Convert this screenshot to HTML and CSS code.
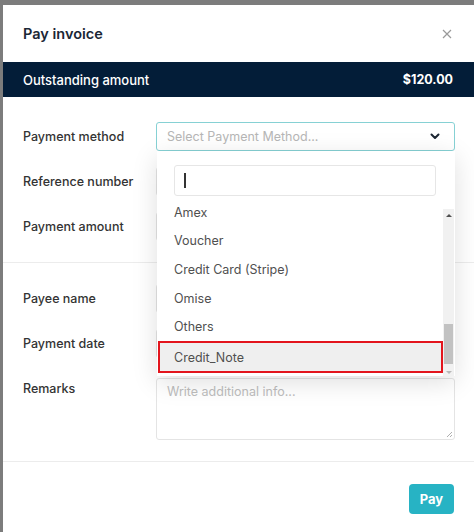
FILE: index.html
```html
<!doctype html>
<html>
  <head>
    <meta charset="UTF-8" />
    <title>Pay invoice</title>
    <link rel="stylesheet" href="styles.css">
  </head>
  <body>
    <div class="modal">
      <!-- header -->
      <div class="modal-header">
        <span class="modal-title">Pay invoice</span>
        <span class="modal-close">
          <svg xmlns="http://www.w3.org/2000/svg" width="10" height="10" viewBox="0 0 10 10">
            <path d="M1 1L9 9M9 1L1 9" stroke="#9a9a9a" stroke-width="1.2" fill="none" />
          </svg>
        </span>
      </div>
      <!-- outstanding -->
      <div class="outstanding">
        <span>Outstanding amount</span>
        <span class="outstanding-value">$120.00</span>
      </div>

      <!-- section 1 -->
      <div class="section">
        <div class="row">
          <label class="row-label">Payment method</label>
          <div class="select-wrap">
            <div class="select">
              <span class="select-placeholder">Select Payment Method...</span>
              <svg xmlns="http://www.w3.org/2000/svg" width="10" height="7" viewBox="0 0 10 7">
                <path d="M1.5 1.5L5 5L8.5 1.5" stroke="#1d2733" stroke-width="2" fill="none" stroke-linecap="round" stroke-linejoin="round" />
              </svg>
            </div>
            <!-- dropdown -->
            <div class="dropdown">
              <div class="dropdown-search">
                <span class="caret"></span>
              </div>
              <div class="dropdown-body">
                <ul class="dropdown-list">
                  <li>Amex</li>
                  <li>Voucher</li>
                  <li>Credit Card (Stripe)</li>
                  <li>Omise</li>
                  <li>Others</li>
                  <li class="active">Credit_Note</li>
                </ul>
                <div class="scrollbar">
                  <span class="scroll-up"></span>
                  <span class="scroll-thumb"></span>
                  <span class="scroll-down"></span>
                </div>
              </div>
            </div>
          </div>
        </div>
        <div class="row">
          <label class="row-label">Reference number</label>
          <div class="input"></div>
        </div>
        <div class="row">
          <label class="row-label">Payment amount</label>
          <div class="input"></div>
        </div>
      </div>

      <!-- section 2 -->
      <div class="section">
        <div class="row">
          <label class="row-label">Payee name</label>
          <div class="input"></div>
        </div>
        <div class="row">
          <label class="row-label">Payment date</label>
          <div class="input"></div>
        </div>
        <div class="row row-top">
          <label class="row-label">Remarks</label>
          <div class="textarea">
            <span class="textarea-placeholder">Write additional info...</span>
            <svg class="resize" xmlns="http://www.w3.org/2000/svg" width="7" height="7" viewBox="0 0 7 7">
              <path d="M6 1L1 6M6 4L4 6" stroke="#9a9a9a" stroke-width="0.8" fill="none" />
            </svg>
          </div>
        </div>
      </div>

      <!-- footer -->
      <div class="modal-footer">
        <div class="button-pay">Pay</div>
      </div>
    </div>
  </body>
</html>
```

FILE: styles.css
```css
html,
body {
  margin: 0;
  height: 100%;
}

body {
  background-color: #7c7c7c;
  overflow: hidden;
  font-family: 'Inter', 'Noto Sans', sans-serif;
  color: #333333;
  -webkit-font-smoothing: antialiased;
}

/* modal */
.modal {
  margin: 5px 0 0 3px;
  width: 471px;
  height: 527px;
  background-color: #ffffff;
  display: flex;
  flex-direction: column;
}

/* header */
.modal-header {
  height: 57px;
  display: flex;
  justify-content: space-between;
  align-items: center;
  padding: 0 22px 0 20px;
  box-sizing: border-box;
}
.modal-header > .modal-title {
  font-size: 14.5px;
  font-weight: 600;
  color: #1b2736;
}
.modal-header > .modal-close {
  display: flex;
}

/* outstanding */
.outstanding {
  height: 35px;
  background-color: #031d38;
  color: #ffffff;
  display: flex;
  justify-content: space-between;
  align-items: center;
  padding: 0 21px 0 20px;
  font-size: 13px;
  font-weight: 500;
}
.outstanding > .outstanding-value {
  font-weight: 700;
  font-size: 12.5px;
}

/* sections */
.section {
  padding: 25px 16px 21px 20px;
  display: flex;
  flex-direction: column;
  gap: 16px;
  border-bottom: 1px solid #ececec;
}
.section + .section {
  padding-top: 21px;
}
.row {
  display: grid;
  grid-template-columns: 133px 299px;
  align-items: center;
}
.row.row-top {
  align-items: start;
  margin-top: 4px;
}
.row.row-top > .row-label {
  padding-top: 3px;
}
.row-label {
  font-size: 12.5px;
  font-weight: 500;
  color: #333333;
}
.input {
  height: 29px;
  border: 1px solid #e4e4e4;
  border-radius: 3px;
  box-sizing: border-box;
}

/* select */
.select-wrap {
  position: relative;
}
.select {
  height: 29px;
  border: 1px solid #86d1d4;
  border-radius: 3px;
  box-sizing: border-box;
  display: flex;
  justify-content: space-between;
  align-items: center;
  padding: 0 14px 0 10px;
}
.select > .select-placeholder {
  font-size: 12.5px;
  color: #b6b6b6;
}

/* dropdown */
.dropdown {
  position: absolute;
  top: 29px;
  left: 1px;
  width: 298px;
  height: 225px;
  background-color: #ffffff;
  box-shadow: 0 6px 24px rgba(0, 0, 0, 0.13);
  display: flex;
  flex-direction: column;
  z-index: 2;
}
.dropdown-search {
  margin: 14px 19px 0 17px;
  height: 29px;
  border: 1px solid #e6e6e6;
  border-radius: 3px;
  display: flex;
  align-items: center;
  padding-left: 9px;
}
.dropdown-search > .caret {
  width: 1.5px;
  height: 15px;
  background-color: #333333;
}
.dropdown-body {
  flex: 1;
  display: flex;
  margin-top: 4px;
  min-height: 0;
}
.dropdown-list {
  list-style: none;
  margin: 0;
  padding: 0;
  flex: 1;
  display: flex;
  flex-direction: column;
  justify-content: flex-end;
  overflow: hidden;
}
.dropdown-list > li {
  height: 28.6px;
  display: flex;
  align-items: center;
  padding-left: 17px;
  font-size: 12.5px;
  color: #505050;
  flex-shrink: 0;
  box-sizing: border-box;
}
.dropdown-list > li.active {
  background-color: #efefef;
  outline: 2px solid #e3151d;
  outline-offset: -2px;
  margin-left: 1px;
  padding-left: 16px;
  height: 32px;
  margin-bottom: 3px;
}

/* scrollbar */
.scrollbar {
  width: 11px;
  margin: 9px 1px 0 0;
  background-color: #f1f1f1;
  display: flex;
  flex-direction: column;
  align-items: center;
  justify-content: space-between;
}
.scroll-up {
  margin-top: 5px;
  width: 0;
  height: 0;
  border-left: 3px solid transparent;
  border-right: 3px solid transparent;
  border-bottom: 3px solid #505050;
}
.scroll-thumb {
  width: 9px;
  height: 40px;
  background-color: #c2c2c2;
  margin-top: auto;
  margin-bottom: 7px;
}
.scroll-down {
  margin-bottom: 2px;
  width: 0;
  height: 0;
  border-left: 3px solid transparent;
  border-right: 3px solid transparent;
  border-top: 3px solid #b8b8b8;
}

/* textarea */
.textarea {
  position: relative;
  height: 62px;
  border: 1px solid #e4e4e4;
  border-radius: 3px;
  box-sizing: border-box;
  padding: 1px 10px;
}
.textarea > .textarea-placeholder {
  font-size: 12.5px;
  color: #bdbdbd;
}
.textarea > .resize {
  position: absolute;
  right: 1px;
  bottom: 1px;
}

/* footer */
.modal-footer {
  display: flex;
  justify-content: flex-end;
  padding: 22px 20px 0 0;
}
.button-pay {
  width: 45px;
  height: 30px;
  border-radius: 4px;
  background-color: #27b3c4;
  color: #ffffff;
  font-size: 13px;
  font-weight: 700;
  display: flex;
  justify-content: center;
  align-items: center;
}
```
